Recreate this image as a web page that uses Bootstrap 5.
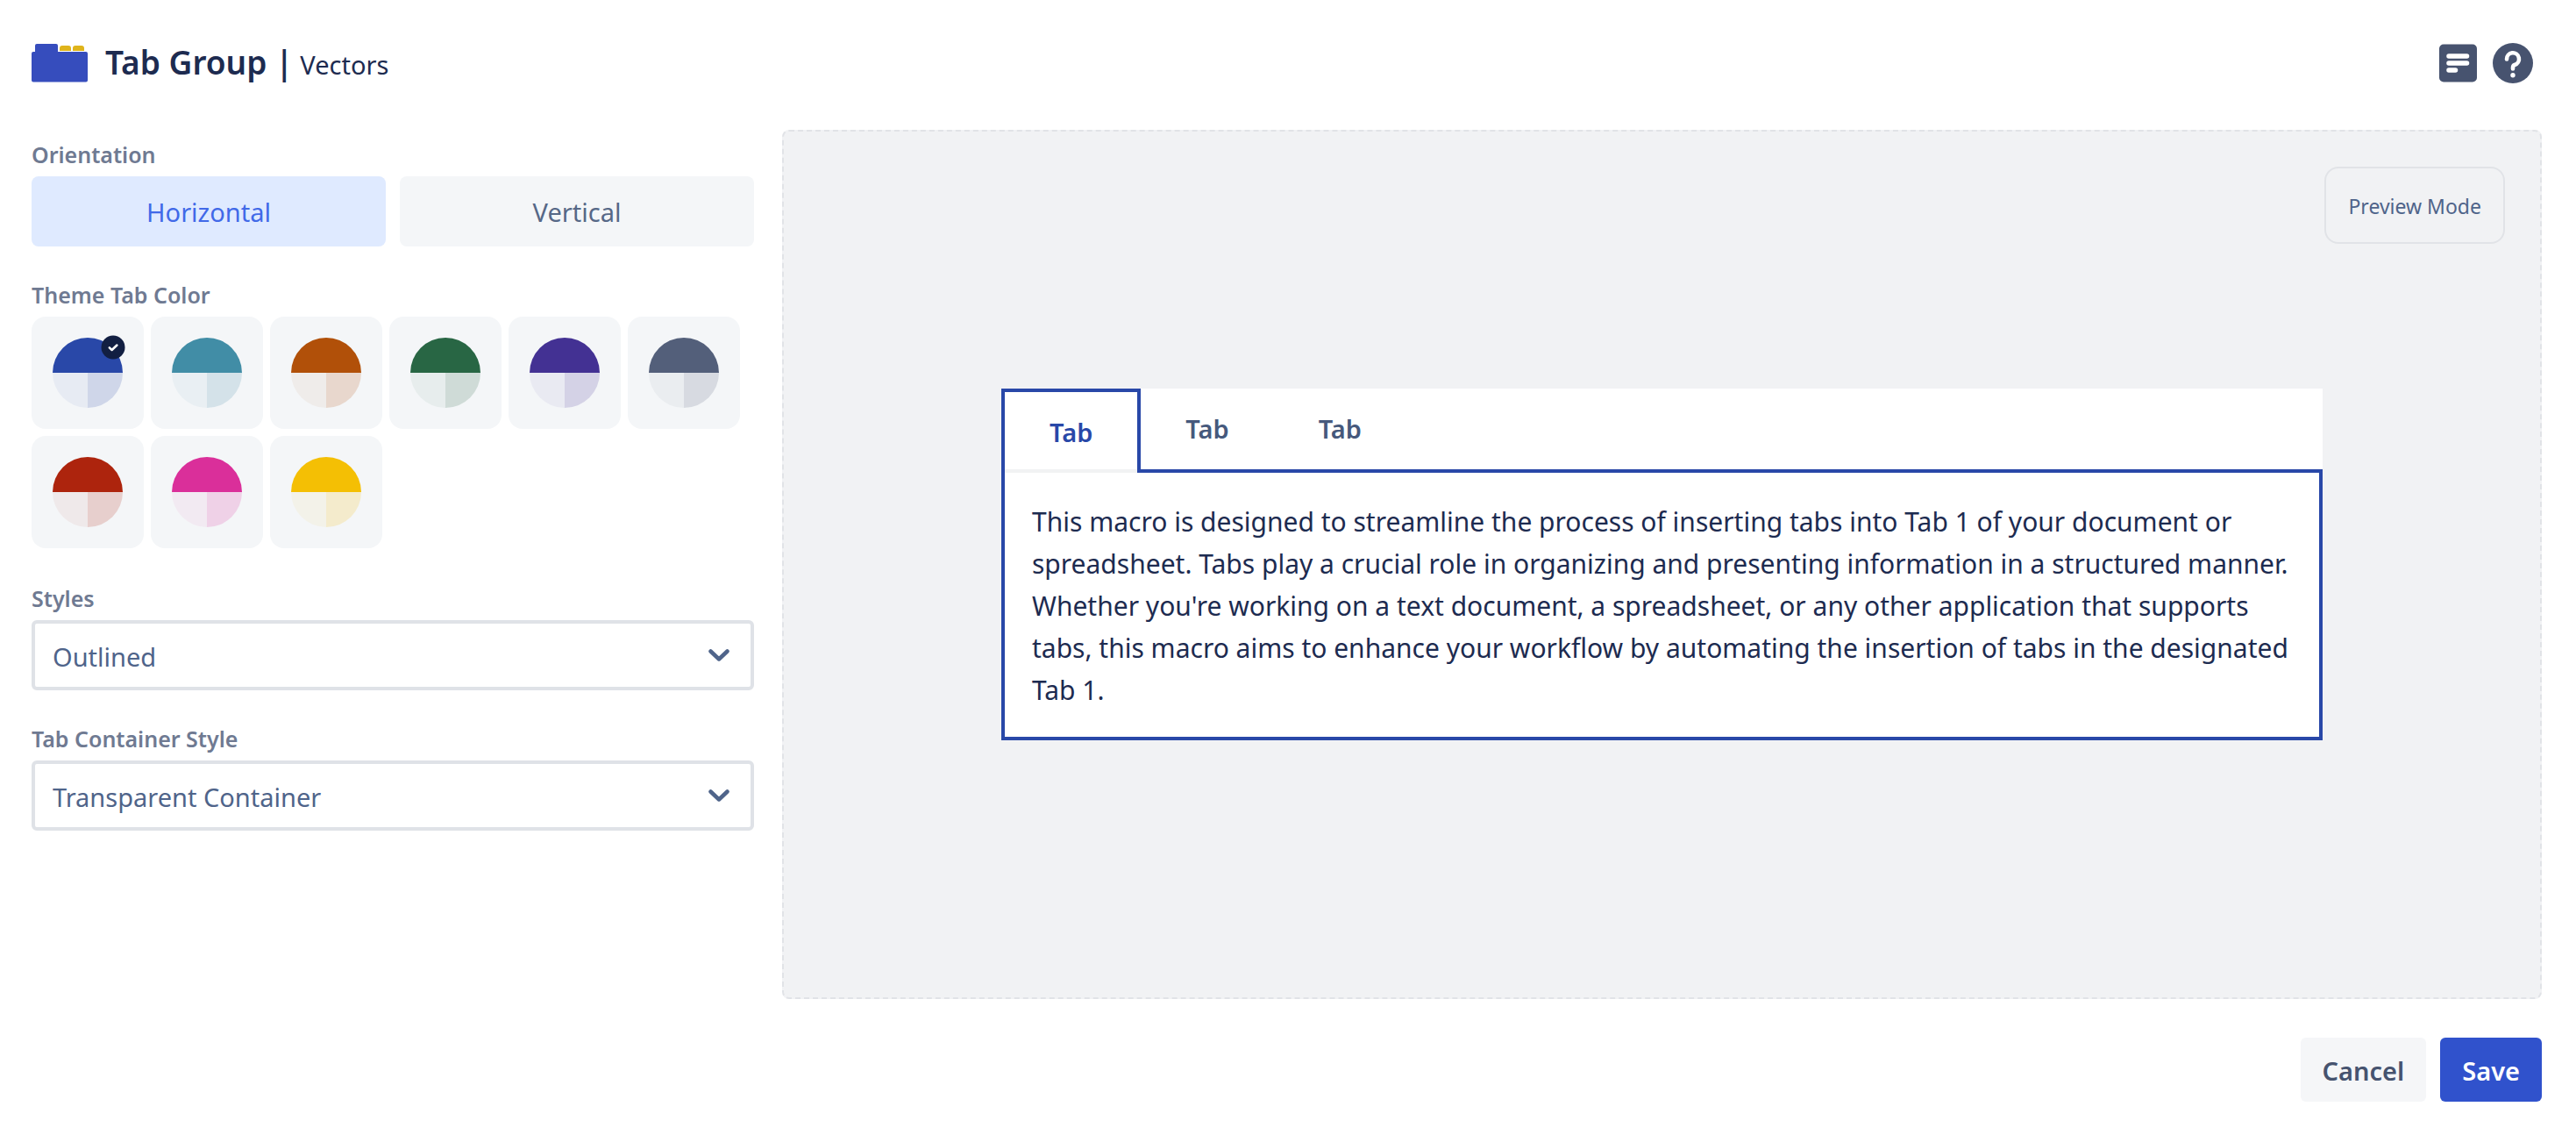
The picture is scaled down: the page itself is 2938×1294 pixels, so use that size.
<!DOCTYPE html>
<html lang="en">
<head>
<meta charset="utf-8">
<meta name="viewport" content="width=device-width, initial-scale=1">
<title>Tab Group | Vectors</title>
<link href="https://cdn.jsdelivr.net/npm/bootstrap@5.3.0/dist/css/bootstrap.min.css" rel="stylesheet">
<style>
  :root { --theme: #2948a8; --slate: #4f648a; --tile: #f4f6f8; --navy: #1d2b50; }
  body { font-family: "Noto Sans", "Open Sans", sans-serif; font-size: 29px; line-height: 48px; color: var(--navy); background: #fff; }
  .editor { padding: 0 39px 38px 36px; }

  /* Header */
  .top-bar { height: 148px; padding-bottom: 4px; padding-right: 10px; }
  .app-title { margin-left: 20px; font-size: 37px; font-weight: 600; line-height: 48px; }
  .macro-name { font-size: 29px; font-weight: 400; }
  .icon-btn { border: 0; padding: 0; background: none; line-height: 0; }

  /* Settings column */
  .workspace { gap: 32px; }
  .settings { flex: 0 1 824px; padding-top: 10px; }
  .field { margin-bottom: 37px; }
  .field-label { display: block; float: none; margin: 0 0 7px; padding: 0; font-size: 25px; font-weight: 600; line-height: 36px; color: #6f7a92; }
  .choice { height: 80px; border: 0; border-radius: 8px; background: var(--tile); color: #566887; font-size: 29px; line-height: 48px; padding: 17px 16px 15px; }
  .btn-check:checked + .choice { background: #dfeaff; color: #4169e8; }
  .swatches { gap: 8px; padding-bottom: 2px; }
  .swatch { position: relative; width: 128px; height: 128px; padding: 24px; border: 0; border-radius: 16px; line-height: 0; }
  .swatch, .swatch:hover, .btn-check:checked + .swatch { background: var(--tile); }
  .tick { display: none; position: absolute; top: 21px; left: 79px; }
  .btn-check:checked + .swatch .tick { display: block; }
  .pie-blue { color: #2948a8; }
  .pie-teal { color: #418da6; }
  .pie-orange { color: #b15009; }
  .pie-green { color: #286644; }
  .pie-purple { color: #433193; }
  .pie-slate { color: #535f7a; }
  .pie-red { color: #ad240d; }
  .pie-pink { color: #da2f9a; }
  .pie-yellow { color: #f4bf04; }
  .picker { height: 80px; border: 4px solid #dfe2e7; border-radius: 6px; color: var(--slate); font-size: 29px; line-height: 48px; padding: 3px 72px 0 20px;
    background-image: url("data:image/svg+xml,%3Csvg xmlns='http://www.w3.org/2000/svg' viewBox='0 0 24 16'%3E%3Cpath d='M2.5 3.5 12 12.5 21.5 3.5' fill='none' stroke='%234f648a' stroke-width='4.5' stroke-linecap='round' stroke-linejoin='round'/%3E%3C/svg%3E");
    background-size: 24px 16px; background-position: right 24px center; }

  /* Preview */
  .preview { min-width: 0; border: 2px dashed #e1e3e7; border-radius: 8px; background: #f1f2f4; padding: 40px; }
  .mode-btn { position: absolute; top: 40px; right: 40px; height: 88px; border: 2px solid #e1e3e7; border-radius: 16px; color: var(--slate); font-size: 23px; line-height: 32px; padding: 1px 25px 0; }
  .tab-demo { width: 100%; max-width: 1507px; background: #fff; }
  .tab-demo .nav-tabs { border: 0; height: 92px; }
  .tab-demo .nav-link { height: 92px; border: 0; border-radius: 0; margin: 0; padding: 22px 51px; font-weight: 600; line-height: 48px; color: #46597c; }
  .tab-demo .nav-link.active { position: relative; z-index: 1; height: 96px; border: 4px solid var(--theme); border-bottom: 0; color: var(--theme); background: linear-gradient(#f1f2f3, #f1f2f3) bottom / 100% 4px no-repeat #fff; }
  .tab-demo .tab-content { border: 4px solid var(--theme); padding: 32px 31px 29px; font-size: 30px; line-height: 48px; }

  /* Footer */
  .foot-bar { padding-top: 44px; gap: 16px; }
  .foot-btn { height: 73px; border: 0; border-radius: 6px; font-weight: 600; font-size: 29px; line-height: 48px; padding: 3px 25px 0; }
  .foot-cancel, .foot-cancel:hover { background: #f5f6f8; color: #46536f; }
  .foot-save, .foot-save:hover { background: #3052cc; color: #fff; }
</style>
<script src="https://cdn.jsdelivr.net/npm/bootstrap@5.3.0/dist/js/bootstrap.bundle.min.js"></script>
</head>
<body>
<svg class="d-none" aria-hidden="true">
  <symbol id="pie" viewBox="0 0 80 80">
    <path d="M0 40a40 40 0 0 1 80 0z" fill="currentColor"/>
    <path d="M0 40a40 40 0 0 0 40 40V40z" fill="currentColor" opacity=".06"/>
    <path d="M80 40a40 40 0 0 1-40 40V40z" fill="currentColor" opacity=".18"/>
  </symbol>
</svg>

<div class="editor d-flex flex-column min-vh-100">
  <header class="top-bar d-flex align-items-center">
    <svg width="64" height="44" viewBox="0 0 64 44" aria-hidden="true">
      <path d="M4 9V2q0-2 2-2h22q2 0 2 2v7h32q2 0 2 2v30.500q0 2-2 2H2q-2 0-2-2V11q0-2 2-2h2z" fill="#364dbd"/>
      <path d="M32 8V5q0-3 3-3h7q3 0 3 3v3zM47 8V5q0-3 3-3h7q3 0 3 3v3z" fill="#dfb41b"/>
    </svg>
    <h1 class="app-title mb-0">Tab Group |<span class="macro-name ms-2">Vectors</span></h1>
    <div class="ms-auto d-flex align-items-center gap-3">
      <button type="button" class="icon-btn" aria-label="Notes">
        <svg width="46" height="46" viewBox="0 0 46 46"><rect x="1" y="1.500" width="43" height="43" rx="5" fill="#47536f"/><path d="M12 15H32.500M12 23H32.500M12 31h7.500" stroke="#fff" stroke-width="5.500" stroke-linecap="round"/></svg>
      </button>
      <button type="button" class="icon-btn" aria-label="Help">
        <svg width="46" height="46" viewBox="0 0 46 46"><circle cx="23" cy="23" r="23" fill="#47536f"/><path d="M16 18.500a7 7 0 1 1 9 6.500Q23 25.800 23 28v1.500" fill="none" stroke="#fff" stroke-width="4.600" stroke-linecap="round" stroke-linejoin="round"/><circle cx="23" cy="36.800" r="2.700" fill="#fff"/></svg>
      </button>
    </div>
  </header>

  <main class="workspace d-flex flex-grow-1">
    <form class="settings" id="settings">
      <fieldset class="field">
        <legend class="field-label">Orientation</legend>
        <div class="d-flex gap-3">
          <input type="radio" class="btn-check" name="orientation" id="horizontal" checked>
          <label class="btn choice w-50" for="horizontal">Horizontal</label>
          <input type="radio" class="btn-check" name="orientation" id="vertical">
          <label class="btn choice w-50" for="vertical">Vertical</label>
        </div>
      </fieldset>

      <fieldset class="field">
        <legend class="field-label">Theme Tab Color</legend>
        <div class="swatches d-flex flex-wrap">
          <input type="radio" class="btn-check" name="theme" id="blue" checked>
          <label class="btn swatch" for="blue" aria-label="Blue">
            <svg class="pie-blue" width="80" height="80"><use href="#pie"/></svg>
            <svg class="tick" width="28" height="28" viewBox="0 0 28 28"><circle cx="14" cy="14" r="13.500" fill="#121f42"/><path d="M9.800 14.300l2.800 2.700 5.800-5.500" fill="none" stroke="#fff" stroke-width="2.500" stroke-linecap="round" stroke-linejoin="round"/></svg>
          </label>
          <input type="radio" class="btn-check" name="theme" id="teal">
          <label class="btn swatch" for="teal" aria-label="Teal"><svg class="pie-teal" width="80" height="80"><use href="#pie"/></svg></label>
          <input type="radio" class="btn-check" name="theme" id="orange">
          <label class="btn swatch" for="orange" aria-label="Orange"><svg class="pie-orange" width="80" height="80"><use href="#pie"/></svg></label>
          <input type="radio" class="btn-check" name="theme" id="green">
          <label class="btn swatch" for="green" aria-label="Green"><svg class="pie-green" width="80" height="80"><use href="#pie"/></svg></label>
          <input type="radio" class="btn-check" name="theme" id="purple">
          <label class="btn swatch" for="purple" aria-label="Purple"><svg class="pie-purple" width="80" height="80"><use href="#pie"/></svg></label>
          <input type="radio" class="btn-check" name="theme" id="slate">
          <label class="btn swatch" for="slate" aria-label="Slate"><svg class="pie-slate" width="80" height="80"><use href="#pie"/></svg></label>
          <input type="radio" class="btn-check" name="theme" id="red">
          <label class="btn swatch" for="red" aria-label="Red"><svg class="pie-red" width="80" height="80"><use href="#pie"/></svg></label>
          <input type="radio" class="btn-check" name="theme" id="pink">
          <label class="btn swatch" for="pink" aria-label="Pink"><svg class="pie-pink" width="80" height="80"><use href="#pie"/></svg></label>
          <input type="radio" class="btn-check" name="theme" id="yellow">
          <label class="btn swatch" for="yellow" aria-label="Yellow"><svg class="pie-yellow" width="80" height="80"><use href="#pie"/></svg></label>
        </div>
      </fieldset>

      <div class="field">
        <label class="field-label" for="styles">Styles</label>
        <select class="form-select picker" id="styles"><option>Outlined</option></select>
      </div>

      <div class="field">
        <label class="field-label" for="container-style">Tab Container Style</label>
        <select class="form-select picker" id="container-style"><option>Transparent Container</option></select>
      </div>
    </form>

    <section class="preview position-relative flex-grow-1 d-flex align-items-center justify-content-center">
      <button type="button" class="btn mode-btn">Preview Mode</button>
      <div class="tab-demo">
        <ul class="nav nav-tabs" role="tablist">
          <li class="nav-item"><button type="button" class="nav-link active" data-bs-toggle="tab" data-bs-target="#tab-1" role="tab">Tab</button></li>
          <li class="nav-item"><button type="button" class="nav-link" data-bs-toggle="tab" data-bs-target="#tab-2" role="tab">Tab</button></li>
          <li class="nav-item"><button type="button" class="nav-link" data-bs-toggle="tab" data-bs-target="#tab-3" role="tab">Tab</button></li>
        </ul>
        <div class="tab-content">
          <div class="tab-pane active" id="tab-1" role="tabpanel">This macro is designed to streamline the process of inserting tabs into Tab 1 of your document or spreadsheet. Tabs play a crucial role in organizing and presenting information in a structured manner. Whether you're working on a text document, a spreadsheet, or any other application that supports tabs, this macro aims to enhance your workflow by automating the insertion of tabs in the designated Tab 1.</div>
          <div class="tab-pane" id="tab-2" role="tabpanel"></div>
          <div class="tab-pane" id="tab-3" role="tabpanel"></div>
        </div>
      </div>
    </section>
  </main>

  <footer class="foot-bar d-flex justify-content-end">
    <button type="button" class="btn foot-btn foot-cancel">Cancel</button>
    <button type="submit" form="settings" class="btn foot-btn foot-save">Save</button>
  </footer>
</div>
</body>
</html>
